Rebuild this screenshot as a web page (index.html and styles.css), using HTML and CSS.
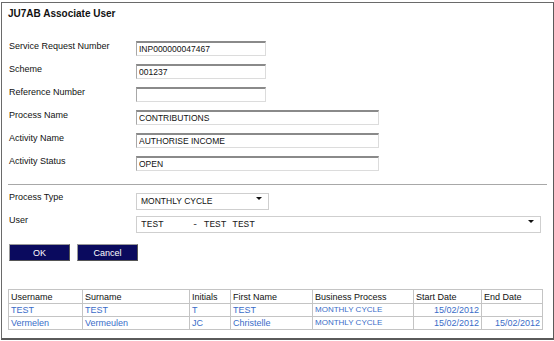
FILE: index.html
```html
<!DOCTYPE html>
<html>

<head>
    <title>JU7AB Associate User</title>
    <link rel="stylesheet" href="styles.css">
</head>

<body>
    <div class="frame">
        <h2 class="title">JU7AB Associate User</h2>

        <div class="fields">
            <label class="field-label">Service Request Number</label>
            <div class="field"><input class="text-box short" type="text" value="INP000000047467" readonly /></div>

            <label class="field-label">Scheme</label>
            <div class="field"><input class="text-box short" type="text" value="001237" readonly /></div>

            <label class="field-label">Reference Number</label>
            <div class="field"><input class="text-box short" type="text" value="" readonly /></div>

            <label class="field-label">Process Name</label>
            <div class="field"><input class="text-box long" type="text" value="CONTRIBUTIONS" readonly /></div>

            <label class="field-label">Activity Name</label>
            <div class="field"><input class="text-box long" type="text" value="AUTHORISE INCOME" readonly /></div>

            <label class="field-label">Activity Status</label>
            <div class="field"><input class="text-box long" type="text" value="OPEN" readonly /></div>
        </div>

        <hr class="divider" />

        <div class="fields">
            <label class="field-label select-label">Process Type</label>
            <div class="field">
                <span class="select-wrap type-select">
                    <select class="drop">
                        <option>MONTHLY CYCLE</option>
                    </select>
                </span>
            </div>

            <label class="field-label select-label">User</label>
            <div class="field">
                <span class="select-wrap user-select">
                    <select class="drop mono">
                        <option>TEST&nbsp;&nbsp;&nbsp;&nbsp;&nbsp;- TEST TEST</option>
                    </select>
                </span>
            </div>
        </div>

        <div class="buttons">
            <button type="button" class="nav-button">OK</button>
            <button type="button" class="nav-button">Cancel</button>
        </div>

        <table class="results">
            <colgroup>
                <col style="width: 74px">
                <col style="width: 107px">
                <col style="width: 41px">
                <col style="width: 82px">
                <col style="width: 101px">
                <col style="width: 68px">
                <col style="width: 61px">
            </colgroup>
            <tr class="head-row">
                <th>Username</th>
                <th>Surname</th>
                <th>Initials</th>
                <th>First Name</th>
                <th>Business Process</th>
                <th>Start Date</th>
                <th>End Date</th>
            </tr>
            <tr>
                <td>TEST</td>
                <td>TEST</td>
                <td>T</td>
                <td>TEST</td>
                <td class="caps">MONTHLY CYCLE</td>
                <td class="date">15/02/2012</td>
                <td class="date"></td>
            </tr>
            <tr>
                <td>Vermelen</td>
                <td>Vermeulen</td>
                <td>JC</td>
                <td>Christelle</td>
                <td class="caps">MONTHLY CYCLE</td>
                <td class="date">15/02/2012</td>
                <td class="date">15/02/2012</td>
            </tr>
        </table>
    </div>
</body>

</html>
```

FILE: styles.css
```css
body {
    font-family: "Liberation Sans", Arial, sans-serif;
    margin: 0;
    padding: 0;
    background-color: #fff;
    color: #000;
}

.frame {
    width: 539px;
    height: 330px;
    margin: 2px 0 0 1px;
    padding: 5px 6px 0 6px;
    border-top: 1px solid #6a6a6a;
    border-left: 1px solid #6a6a6a;
    border-right: 2px solid #5a5a5a;
    border-bottom: 2px solid #5a5a5a;
    background-color: #fff;
}

.title {
    margin: 0 0 20px;
    font-size: 10px;
    line-height: 12px;
    font-weight: bold;
    color: #111;
}

.fields {
    display: grid;
    grid-template-columns: 128px 1fr;
    grid-auto-rows: 23px;
}

.field-label {
    padding-left: 1px;
    font-size: 9px;
    line-height: 12px;
    color: #111;
}

.select-label {
    padding-top: 2px;
}

.field {
    padding-top: 1px;
}

.text-box {
    box-sizing: border-box;
    display: block;
    height: 15px;
    margin: 0;
    padding: 0 2px;
    border: 1px solid #dcdcdc;
    border-top: 2px solid #8a8a8a;
    border-left: 1px solid #a8a8a8;
    font-family: "Liberation Sans", Arial, sans-serif;
    font-size: 8.5px;
    color: #111;
    outline: none;
}

.short {
    width: 130px;
}

.long {
    width: 243px;
}

.divider {
    margin: 6px 0 4px;
    border: none;
    border-top: 1px solid #a8a8a8;
    height: 0;
}

.select-wrap {
    position: relative;
    display: block;
    height: 17px;
}

.type-select {
    width: 133px;
}

.user-select {
    width: 405px;
}

.select-wrap::after {
    content: "";
    position: absolute;
    right: 7px;
    top: 7px;
    border-left: 3px solid transparent;
    border-right: 3px solid transparent;
    border-top: 3px solid #111;
}

.drop {
    appearance: none;
    -webkit-appearance: none;
    box-sizing: border-box;
    width: 100%;
    height: 17px;
    margin: 0;
    padding: 0 0 0 4px;
    border: 1px solid #cfcfcf;
    border-radius: 0;
    background-color: #fff;
    font-family: "Liberation Sans", Arial, sans-serif;
    font-size: 8.5px;
    color: #111;
}

.drop.mono {
    font-family: "Liberation Mono", "Courier New", monospace;
    font-size: 9.5px;
    color: #222;
}

.buttons {
    display: flex;
    gap: 7px;
    margin: 9px 0 0 1px;
}

.nav-button {
    box-sizing: border-box;
    width: 61px;
    height: 17px;
    padding: 0;
    background-color: #0a0a5e;
    color: #fff;
    border: 1px solid #9a9a9a;
    border-right-color: #555;
    border-bottom-color: #555;
    border-radius: 0;
    font-family: "Liberation Sans", Arial, sans-serif;
    font-size: 9px;
    cursor: pointer;
}

.results {
    margin-top: 28px;
    width: 534px;
    border-collapse: collapse;
    table-layout: fixed;
    font-size: 9px;
}

.results th,
.results td {
    height: 12px;
    padding: 0 2px;
    border: 1px solid #c4c4c4;
    line-height: 12px;
    text-align: left;
    white-space: nowrap;
    overflow: hidden;
}

.results th {
    font-weight: normal;
    color: #111;
    height: 13px;
}

.results td {
    color: #3a6cc8;
}

.results .caps {
    font-size: 8px;
}

.results .date {
    text-align: right;
}
```
